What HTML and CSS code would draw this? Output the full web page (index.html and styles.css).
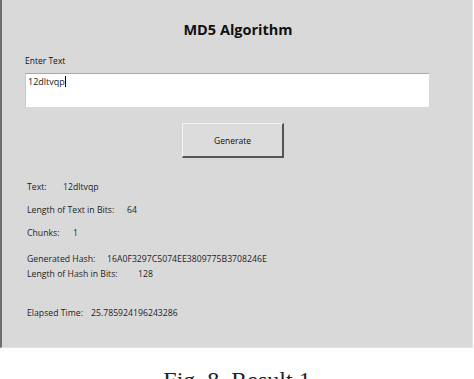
FILE: index.html
```html
<!DOCTYPE html>
<html lang="en">
<head>
  <meta charset="UTF-8">
  <title>MD5 Algorithm</title>
  <link rel="stylesheet" href="styles.css">
</head>
<body>

  <div class="window">
    <h1>MD5 Algorithm</h1>

    <label class="field-label">Enter Text</label>
    <div class="text-input">12dltvqp<span class="caret"></span></div>

    <div class="actions">
      <button class="btn">Generate</button>
    </div>

    <div class="results">
      <div class="row row-text"><span class="key">Text:</span><span class="val">12dltvqp</span></div>
      <div class="row row-bits"><span class="key">Length of Text in Bits:</span><span class="val">64</span></div>
      <div class="row row-chunks"><span class="key">Chunks:</span><span class="val">1</span></div>
      <div class="row row-hash"><span class="key">Generated Hash:</span><span class="val">16A0F3297C5074EE3809775B3708246E</span></div>
      <div class="row row-hbits"><span class="key">Length of Hash in Bits:</span><span class="val">128</span></div>
      <div class="row row-time"><span class="key">Elapsed Time:</span><span class="val">25.785924196243286</span></div>
    </div>
  </div>

  <p class="caption">Fig. 8. Result 1</p>

</body>
</html>
```

FILE: styles.css
```css
body {
  margin: 0;
  background: #fff;
  font-family: "Open Sans", "Noto Sans", sans-serif;
  overflow: hidden;
}

.window {
  box-sizing: border-box;
  width: 473px;
  height: 348px;
  background: #d9d9d9;
  border-left: 2px solid #6e6e6e;
  border-right: 1px solid #e6e6e6;
  border-bottom: 1px solid #e2e2e2;
  padding: 20px 0 0 23px;
}

h1 {
  margin: 0 0 0 -21px;
  text-align: center;
  font-size: 14.5px;
  font-weight: bold;
  color: #111;
  line-height: 20px;
}

.field-label {
  display: block;
  margin-top: 15px;
  font-size: 8.5px;
  color: #111;
  line-height: 12px;
}

.text-input {
  box-sizing: border-box;
  width: 404px;
  height: 34px;
  margin-top: 6px;
  background: #fff;
  border-top: 1px solid #a8a8a8;
  border-left: 1px solid #c8c8c8;
  padding: 2px 2px;
  font-size: 9px;
  color: #222;
  line-height: 12px;
}

.caret {
  display: inline-block;
  width: 1px;
  height: 11px;
  background: #000;
  vertical-align: -2px;
}

.actions {
  margin-top: 16px;
  margin-left: 157px;
}

.btn {
  box-sizing: border-box;
  width: 102px;
  height: 35px;
  padding: 0;
  background: #dcdcdc;
  border: none;
  border-top: 1px solid #f4f4f4;
  border-left: 1px solid #f4f4f4;
  border-right: 2px solid #555;
  border-bottom: 2px solid #555;
  font-family: "Open Sans", "Noto Sans", sans-serif;
  font-size: 8.5px;
  color: #111;
}

.results {
  margin-top: 23px;
  padding-left: 2px;
  font-size: 8.7px;
  color: #1e1e1e;
}

.row {
  display: flex;
  line-height: 12px;
}

.key { flex: none; }
.row-text .key { width: 36px; }
.row-bits .key { width: 100px; }
.row-chunks .key { width: 46px; }
.row-hash .key { width: 80px; }
.row-hbits .key { width: 111px; }
.row-time .key { width: 64px; }

.row-bits, .row-chunks { margin-top: 11px; }
.row-hash { margin-top: 14px; }
.row-hbits { margin-top: 3px; }
.row-time { margin-top: 27px; }

.caption {
  margin: 20px 0 0;
  text-align: center;
  font-family: "Liberation Serif", serif;
  font-size: 24px;
  line-height: 24px;
  color: #222;
}
```
